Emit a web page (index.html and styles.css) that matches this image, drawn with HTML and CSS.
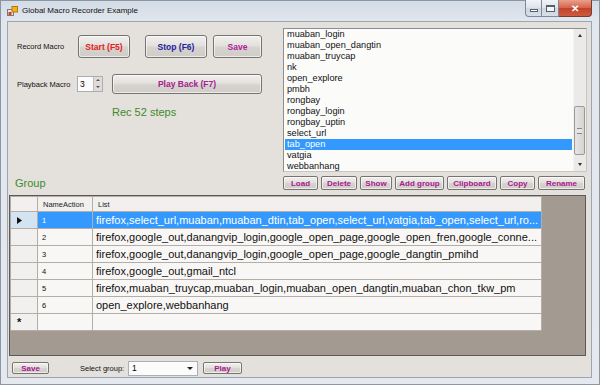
FILE: index.html
```html
<!DOCTYPE html>
<html lang="en">
<head>
    <meta charset="UTF-8">
    <title>Global Macro Recorder Example</title>
    <link rel="stylesheet" href="styles.css">
</head>
<body>

    <div class="window">
        <!-- Title bar -->
        <div class="titlebar">
            <svg class="app-icon" width="11" height="11" viewBox="0 0 11 11">
                <rect x="0.5" y="3.5" width="6" height="6" fill="#e8e8e8" stroke="#7a7a7a"/>
                <rect x="5" y="0.5" width="5.5" height="5.5" fill="#f2b21e" stroke="#b9780c"/>
                <rect x="1.5" y="6" width="3" height="3" fill="#d33b25"/>
            </svg>
            <span class="title">Global Macro Recorder Example</span>
            <div class="caption-buttons">
                <span class="cap cap-min"><i></i></span>
                <span class="cap cap-max"><i></i></span>
                <span class="cap cap-close">&#10005;</span>
            </div>
        </div>

        <div class="client">
            <div class="top">
                <!-- Record / playback controls -->
                <div class="controls">
                    <div class="rec-row">
                        <span class="field-label">Record Macro</span>
                        <button class="btn btn-start">Start (F5)</button>
                        <button class="btn btn-stop">Stop (F6)</button>
                        <button class="btn btn-save">Save</button>
                    </div>
                    <div class="play-row">
                        <span class="field-label">Playback Macro</span>
                        <div class="spinner">
                            <span class="spin-value">3</span>
                            <div class="spin-arrows">
                                <span class="spin-up"></span>
                                <span class="spin-down"></span>
                            </div>
                        </div>
                        <button class="btn btn-playback">Play Back (F7)</button>
                    </div>
                    <div class="status">Rec 52 steps</div>
                </div>

                <!-- Saved macros -->
                <div class="macro-list">
                    <ul class="macro-items">
                        <li>muaban_login</li>
                        <li>muaban_open_dangtin</li>
                        <li>muaban_truycap</li>
                        <li>nk</li>
                        <li>open_explore</li>
                        <li>pmbh</li>
                        <li>rongbay</li>
                        <li>rongbay_login</li>
                        <li>rongbay_uptin</li>
                        <li>select_url</li>
                        <li class="selected">tab_open</li>
                        <li>vatgia</li>
                        <li>webbanhang</li>
                    </ul>
                    <div class="vscroll">
                        <span class="arrow arrow-up"></span>
                        <span class="track-gap"></span>
                        <span class="thumb"><i></i></span>
                        <span class="track-rest"></span>
                        <span class="arrow arrow-down"></span>
                    </div>
                </div>
            </div>

            <div class="mid">
                <span class="group-title">Group</span>
                <div class="list-buttons">
                    <button class="btn small w-load">Load</button>
                    <button class="btn small w-delete">Delete</button>
                    <button class="btn small w-show">Show</button>
                    <button class="btn small w-add">Add group</button>
                    <button class="btn small w-clip">Clipboard</button>
                    <button class="btn small w-copy">Copy</button>
                    <button class="btn small w-rename">Rename</button>
                </div>
            </div>

            <!-- Groups grid -->
            <div class="grid">
                <table class="group-table">
                    <colgroup>
                        <col class="c-head">
                        <col class="c-name">
                        <col class="c-list">
                    </colgroup>
                    <tr class="header-row">
                        <th></th>
                        <th>NameAction</th>
                        <th>List</th>
                    </tr>
                    <tr class="current">
                        <td class="row-head"><svg width="5" height="7" viewBox="0 0 5 7"><polygon points="0,0 5,3.5 0,7" fill="#111"/></svg></td>
                        <td class="num">1</td>
                        <td class="list">firefox,select_url,muaban,muaban_dtin,tab_open,select_url,vatgia,tab_open,select_url,ro...</td>
                    </tr>
                    <tr>
                        <td class="row-head"></td>
                        <td class="num">2</td>
                        <td class="list">firefox,google_out,danangvip_login,google_open_page,google_open_fren,google_conne...</td>
                    </tr>
                    <tr>
                        <td class="row-head"></td>
                        <td class="num">3</td>
                        <td class="list">firefox,google_out,danangvip_login,google_open_page,google_dangtin_pmihd</td>
                    </tr>
                    <tr>
                        <td class="row-head"></td>
                        <td class="num">4</td>
                        <td class="list">firefox,google_out,gmail_ntcl</td>
                    </tr>
                    <tr>
                        <td class="row-head"></td>
                        <td class="num">5</td>
                        <td class="list">firefox,muaban_truycap,muaban_login,muaban_open_dangtin,muaban_chon_tkw_pm</td>
                    </tr>
                    <tr>
                        <td class="row-head"></td>
                        <td class="num">6</td>
                        <td class="list">open_explore,webbanhang</td>
                    </tr>
                    <tr class="new-row">
                        <td class="row-head">*</td>
                        <td class="num"></td>
                        <td class="list"></td>
                    </tr>
                </table>
            </div>

            <div class="bottom-bar">
                <button class="btn tiny w-save2">Save</button>
                <span class="select-label">Select group:</span>
                <div class="combo">
                    <span>1</span>
                    <span class="combo-arrow"></span>
                </div>
                <button class="btn tiny w-play">Play</button>
            </div>
        </div>
    </div>

</body>
</html>
```

FILE: styles.css
```css
* {
    box-sizing: border-box;
}

body {
    margin: 0;
    font-family: "Liberation Sans", Arial, sans-serif;
    background-color: #dfe4eb;
}

.window {
    width: 600px;
    height: 385px;
    background: linear-gradient(#d3dbe5, #e2e7ee 22px, #e4e9ef);
    box-shadow: inset 0 0 0 1px #8a96a5;
    overflow: hidden;
}

/* Title bar */
.titlebar {
    height: 21px;
    display: flex;
    align-items: center;
}

.app-icon {
    margin-left: 7px;
    margin-top: 1px;
}

.title {
    margin-left: 4px;
    font-size: 8px;
    color: #111;
}

.caption-buttons {
    margin-left: auto;
    margin-right: 8px;
    align-self: flex-start;
    display: flex;
    height: 17px;
}

.cap {
    height: 17px;
    border: 1px solid #7d8a9b;
    border-top: none;
    background: linear-gradient(#f1f4f7, #dde3ea 50%, #cdd5df 51%, #d8dee6);
    display: flex;
    align-items: center;
    justify-content: center;
}

.cap-min {
    width: 16px;
    border-radius: 0 0 0 4px;
    border-right: none;
}

.cap-min i {
    width: 8px;
    height: 3px;
    margin-top: 5px;
    background: #fff;
    border: 1px solid #55606e;
}

.cap-max {
    width: 18px;
}

.cap-max i {
    width: 9px;
    height: 7px;
    border: 1px solid #55606e;
    border-top-width: 2px;
    background: #f4f6f8;
}

.cap-close {
    width: 33px;
    border-color: #7b3b2e;
    border-left: none;
    border-radius: 0 0 4px 0;
    background: linear-gradient(#e9a08b, #d4634a 50%, #c2412a 51%, #cf5a3c);
    color: #fff;
    font-size: 10px;
    font-weight: bold;
}

/* Client area */
.client {
    margin: 0 8px 0 7px;
    height: 357px;
    border: 1px solid #9ca6b2;
    background-color: #e4e1dc;
    padding-right: 4px;
}

.top {
    display: flex;
    padding-top: 6px;
}

.controls {
    width: 275px;
}

.field-label {
    display: inline-block;
    padding-left: 9px;
    font-size: 7.5px;
    color: #111;
}

.rec-row {
    display: flex;
    align-items: center;
    height: 23px;
    margin-top: 7px;
}

.rec-row .field-label {
    width: 70px;
}

.btn {
    font-family: "Liberation Sans", Arial, sans-serif;
    font-weight: bold;
    font-size: 8.5px;
    padding: 0;
    border: 1px solid #767471;
    border-radius: 3px;
    background: linear-gradient(#f1f0ee, #e3e1de 45%, #d6d3cf 55%, #d0cdc9);
    box-shadow: inset 0 0 0 1px rgba(255, 255, 255, 0.6);
    cursor: pointer;
}

.btn-start {
    width: 52px;
    height: 23px;
    color: #e4231c;
}

.btn-stop {
    width: 62px;
    height: 23px;
    margin-left: 15px;
    color: #23239b;
}

.btn-save {
    width: 49px;
    height: 23px;
    margin-left: 6px;
    color: #b01c9e;
}

.play-row {
    display: flex;
    align-items: center;
    height: 20px;
    margin-top: 16px;
}

.play-row .field-label {
    width: 69px;
}

.spinner {
    width: 26px;
    height: 16px;
    display: flex;
    border: 1px solid #a9aeb5;
    background-color: #fbfbfb;
}

.spin-value {
    flex: 1;
    font-size: 8.5px;
    line-height: 14px;
    padding-left: 2px;
}

.spin-arrows {
    width: 9px;
    display: flex;
    flex-direction: column;
    background: #dedcd9;
    border-left: 1px solid #c0bdb9;
}

.spin-up,
.spin-down {
    flex: 1;
    position: relative;
}

.spin-up::after,
.spin-down::after {
    content: "";
    position: absolute;
    left: 2px;
    top: 2px;
    border-left: 2px solid transparent;
    border-right: 2px solid transparent;
}

.spin-up::after {
    border-bottom: 2px solid #555;
}

.spin-down::after {
    border-top: 2px solid #555;
}

.btn-playback {
    width: 150px;
    height: 20px;
    margin-left: 9px;
    color: #a5208f;
}

.status {
    margin: 11px 0 0 104px;
    font-size: 11px;
    line-height: 14px;
    color: #3c8a2b;
}

/* Macro list box */
.macro-list {
    width: 304px;
    height: 144px;
    display: flex;
    border: 1px solid #8b8f95;
    border-right-color: #c9c7c3;
    border-bottom-color: #c9c7c3;
    background-color: #fbfbfa;
}

.macro-items {
    flex: 1;
    list-style: none;
    margin: 0;
    padding: 0 1px;
    font-size: 9.2px;
    line-height: 11px;
    color: #111;
}

.macro-items li {
    height: 11px;
    padding-left: 2px;
}

.macro-items li.selected {
    background-color: #3399ff;
    color: #fff;
}

.vscroll {
    width: 13px;
    display: flex;
    flex-direction: column;
    background-color: #ebeae8;
    border-left: 1px solid #f4f3f1;
}

.arrow {
    height: 16px;
    position: relative;
}

.arrow::after {
    content: "";
    position: absolute;
    left: 4px;
    border-left: 2.5px solid transparent;
    border-right: 2.5px solid transparent;
}

.arrow-up::after {
    top: 5px;
    border-bottom: 3px solid #333;
}

.arrow-down::after {
    bottom: 5px;
    border-top: 3px solid #333;
}

.track-gap {
    height: 62px;
}

.thumb {
    height: 50px;
    width: 11px;
    border: 1px solid #9c9a97;
    border-radius: 2px;
    background: linear-gradient(90deg, #e6e5e3, #d7d5d2);
    display: flex;
    align-items: center;
    justify-content: center;
}

.thumb i {
    width: 5px;
    height: 6px;
    border-top: 1px solid #8c8a87;
    border-bottom: 1px solid #8c8a87;
    background: linear-gradient(#e6e5e3 40%, #8c8a87 40%, #8c8a87 60%, #e6e5e3 60%);
}

.track-rest {
    flex: 1;
}

/* Group label and list buttons */
.mid {
    display: flex;
    align-items: center;
    height: 14px;
    margin-top: 4px;
}

.group-title {
    width: 275px;
    padding-left: 7px;
    font-size: 11px;
    color: #3c8a2b;
}

.list-buttons {
    display: flex;
    gap: 3px;
}

.btn.small {
    height: 14px;
    font-size: 8px;
    color: #a8198f;
    border-radius: 2px;
}

.w-load { width: 35px; }
.w-delete { width: 36px; }
.w-show { width: 32px; }
.w-add { width: 49px; }
.w-clip { width: 50px; }
.w-copy { width: 35px; }
.w-rename { width: 47px; }

/* Data grid */
.grid {
    margin: 5px 0 0 1px;
    width: 577px;
    height: 161px;
    border: 1px solid #5e5954;
    background-color: #a39a92;
}

.group-table {
    width: 531px;
    table-layout: fixed;
    border-collapse: collapse;
}

.c-head { width: 27px; }
.c-name { width: 55px; }
.c-list { width: 449px; }

.group-table th,
.group-table td {
    border: 1px solid #b3aea8;
    padding: 0;
    white-space: nowrap;
    overflow: hidden;
}

.group-table th {
    height: 15px;
    background-color: #f1f0ee;
    font-weight: normal;
    font-size: 7.5px;
    text-align: left;
    padding-left: 5px;
    color: #222;
}

.group-table td {
    height: 17px;
    background-color: #f8f7f5;
    color: #111;
}

.group-table td.row-head {
    background-color: #f1f0ee;
    padding-left: 6px;
    font-weight: bold;
    font-size: 11px;
    line-height: 10px;
}

.group-table td.num {
    font-size: 7.5px;
    padding-left: 4px;
}

.group-table td.list {
    font-size: 11px;
    padding-left: 3px;
}

.group-table tr.current td {
    background-color: #3399ff;
    color: #fff;
}

.group-table tr.current td.row-head {
    background-color: #d4e3f1;
}

/* Bottom bar */
.bottom-bar {
    display: flex;
    align-items: center;
    height: 16px;
    margin-top: 4px;
}

.btn.tiny {
    height: 12px;
    font-size: 8px;
    color: #a8198f;
    border-radius: 2px;
}

.w-save2 {
    width: 37px;
    margin-left: 4px;
}

.select-label {
    width: 48px;
    margin-left: 31px;
    font-size: 7.5px;
    color: #111;
}

.combo {
    width: 70px;
    height: 15px;
    display: flex;
    align-items: center;
    justify-content: space-between;
    padding: 0 4px 0 3px;
    border: 1px solid #aab0b8;
    background-color: #fbfbfb;
    font-size: 8.5px;
}

.combo-arrow {
    border-left: 3px solid transparent;
    border-right: 3px solid transparent;
    border-top: 3px solid #222;
}

.w-play {
    width: 39px;
    margin-left: 5px;
}
```
